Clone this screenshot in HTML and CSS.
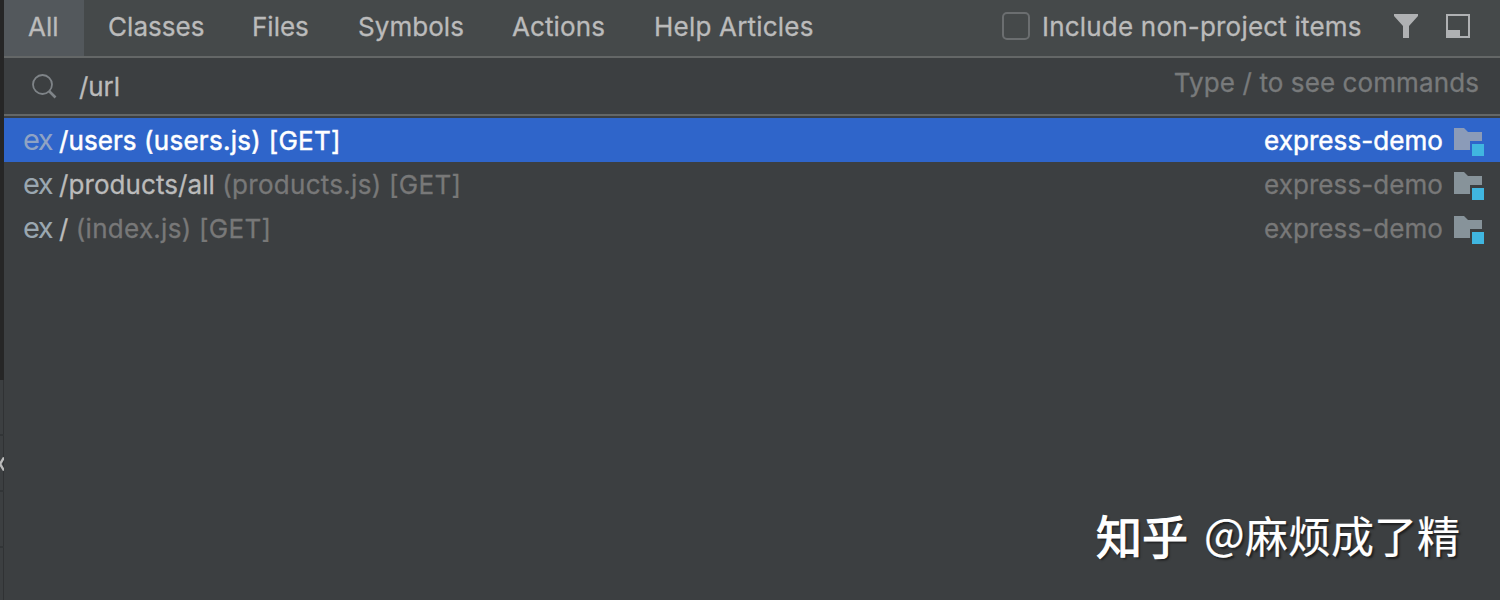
FILE: index.html
```html
<!DOCTYPE html>
<html lang="en">
<head>
<meta charset="utf-8">
<title>Search Everywhere</title>
<link rel="stylesheet" href="styles.css">
</head>
<body>
<svg width="0" height="0" class="defs">
  <symbol id="folder" viewBox="0 0 32 32">
    <path d="M0 4H10L14 8H28V17H16V26H0Z" fill="currentColor"/>
    <path d="M18 20H30V32H18Z" fill="#40b6e0"/>
  </symbol>
</svg>
<div class="screen">
  <div class="editor-edge">
    <div class="edge-dark"></div>
    <div class="edge-row"></div>
    <div class="edge-row edge-label"><svg width="4" height="14" viewBox="0 0 4 14"><path d="M4 0.5L0 7L4 13.5" fill="none" stroke="#bbbbbb" stroke-width="2.4"/></svg></div>
    <div class="edge-row"></div>
    <div class="edge-rest"></div>
  </div>
  <main class="popup">
    <header class="tabs">
      <div class="tab tab-all active">All</div>
      <div class="tab tab-classes">Classes</div>
      <div class="tab tab-files">Files</div>
      <div class="tab tab-symbols">Symbols</div>
      <div class="tab tab-actions">Actions</div>
      <div class="tab tab-help">Help Articles</div>
      <div class="options">
        <span class="checkbox"></span>
        <span class="include">Include non-project items</span>
        <svg class="filter" width="24" height="24" viewBox="0 0 24 24"><path d="M0 0H24V2L15 12V24H9V12L0 2Z" fill="#afb1b3"/></svg>
        <svg class="window" width="24" height="24" viewBox="0 0 24 24"><path d="M1 1H23V23H1Z" fill="none" stroke="#afb1b3" stroke-width="2"/><path d="M1 16H14V23H1Z" fill="#afb1b3"/></svg>
      </div>
    </header>
    <section class="search">
      <svg class="magnifier" width="26" height="26" viewBox="0 0 26 26" fill="none" stroke="#7f8488"><circle cx="10.5" cy="10.5" r="9.5" stroke-width="1.8"/><path d="M17 17L23.5 23.5" stroke-width="2.6"/></svg>
      <span class="query">/url</span>
      <span class="hint">Type / to see commands</span>
    </section>
    <section class="results">
      <div class="result selected">
        <span class="ex">ex</span><span class="name">/users <span class="detail">(users.js) [GET]</span></span>
        <span class="module">express-demo</span><svg class="folder" width="32" height="32"><use href="#folder"/></svg>
      </div>
      <div class="result">
        <span class="ex">ex</span><span class="name">/products/all <span class="detail">(products.js) [GET]</span></span>
        <span class="module">express-demo</span><svg class="folder" width="32" height="32"><use href="#folder"/></svg>
      </div>
      <div class="result">
        <span class="ex">ex</span><span class="name">/ <span class="detail">(index.js) [GET]</span></span>
        <span class="module">express-demo</span><svg class="folder" width="32" height="32"><use href="#folder"/></svg>
      </div>
    </section>
    <footer class="watermark" lang="zh-CN"><span class="brand">知乎</span><span class="at">@</span><span>麻烦成了精</span></footer>
  </main>
</div>
</body>
</html>
```
FILE: styles.css
```css
* { box-sizing: border-box; }
body { margin: 0; background: #3c3f41; overflow: hidden; }
.defs { display: block; }
.screen {
  display: flex;
  width: 1500px;
  height: 600px;
  font: 26px/32px Inter, "Liberation Sans", sans-serif;
  color: #bbbbbb;
  white-space: nowrap;
  -webkit-text-stroke: 0.3px currentColor;
}
.editor-edge { display: flex; flex-direction: column; width: 4px; flex: none; box-shadow: inset -1px 0 #303234; }
.edge-dark { height: 380px; background: #262626; }
.edge-row { height: 56px; border-bottom: 2px solid #323537; }
.edge-rest { flex: 1; }
.edge-label { display: flex; align-items: center; padding-top: 2px; }
.popup { display: flex; flex-direction: column; flex: 1; min-width: 0; }

.tabs { display: flex; height: 58px; background: #45494a; border-bottom: 2px solid #646767; }
.tab { display: flex; align-items: center; padding: 0 0 2px 24px; flex: none; }
.active { background: #53585c; }
.tab-all { width: 80px; }
.tab-classes { width: 144px; letter-spacing: 0.05px; }
.tab-files { width: 106px; }
.tab-symbols { width: 154px; letter-spacing: 0.05px; }
.tab-actions { width: 141px; letter-spacing: 0.1px; }
.tab-help { width: 210px; padding-left: 25px; letter-spacing: 0.2px; }
.options { display: flex; align-items: center; margin-left: auto; padding: 0 30px 4px 0; }
.checkbox { width: 28px; height: 28px; border: 2px solid #6b6e70; border-radius: 5px; }
.include { width: 364px; padding: 2px 0 0 12px; letter-spacing: 0.2px; }
.window { margin-left: 28px; }

.search { display: flex; align-items: center; height: 58px; padding: 0 21px 0 28px; border-bottom: 2px solid #646767; }
.magnifier { margin-top: 1px; }
.query { padding: 2px 0 0 21px; letter-spacing: -0.1px; }
.hint { margin-left: auto; padding-bottom: 6px; color: #787a7b; letter-spacing: 0.1px; }

.results { padding-top: 2px; }
.result { display: flex; align-items: center; height: 44px; padding: 0 14px 0 19px; }
.ex { width: 36px; padding-bottom: 1px; font-size: 29px; letter-spacing: -1.6px; color: #9aa7b0; -webkit-text-stroke-width: 0; }
.name { padding-top: 2px; letter-spacing: 0.08px; }
.detail { letter-spacing: 0.28px; }
.detail, .module { color: #787878; }
.module { margin-left: auto; padding-top: 2px; letter-spacing: 0.08px; }
.folder { margin-left: 11px; color: #87939a; }
.selected { background: #2f65ca; color: #ffffff; -webkit-text-stroke-width: 0.5px; }
.selected .detail, .selected .module { color: #ffffff; }
.selected .ex { color: #8fa3c4; }
.selected .folder { color: #8b9bb8; }

.watermark {
  display: flex;
  align-items: center;
  margin: auto 40px 33px auto;
  font: 43px/60px "Noto Sans CJK SC", sans-serif;
  color: #ffffff;
  text-shadow: 2px 2px 2px rgba(0, 0, 0, 0.5);
  -webkit-text-stroke-width: 0.2px;
}
.at { width: 41px; padding-bottom: 6px; }
.brand { margin-right: 16px; font-size: 46px; -webkit-text-stroke-width: 1.2px; }
```
